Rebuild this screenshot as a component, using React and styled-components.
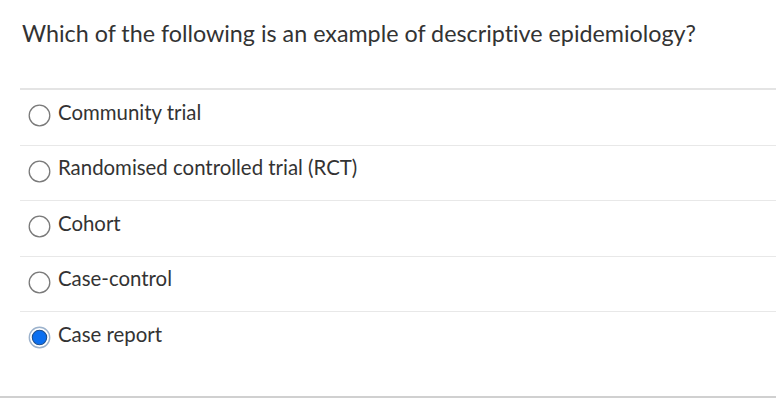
import React from "react";
import styled, { createGlobalStyle } from "styled-components";

const Global = createGlobalStyle`
  html, body { margin: 0; padding: 0; background: #fff; }
  body {
    font-family: Lato, "Open Sans", sans-serif;
    color: #333;
    font-variant-ligatures: none;
  }
`;

const Page = styled.div`
  width: 776px;
  height: 420px;
  box-sizing: border-box;
`;

const Quiz = styled.div`
  border-bottom: 2px solid #d0d0d0;
`;

const Question = styled.div`
  font-size: 23.3px;
  line-height: 26px;
  padding: 20px 0 0 22px;
  height: 88px;
  box-sizing: border-box;
`;

const Options = styled.div`
  margin-left: 20px;
  border-top: 2px solid #e4e4e4;
`;

const Row = styled.label`
  display: flex;
  align-items: flex-start;
  gap: 7px;
  height: ${(p) => (p.$last ? "84px" : "55.5px")};
  box-sizing: border-box;
  padding: 9.5px 0 0 8px;
  border-bottom: ${(p) => (p.$last ? "none" : "1.5px solid #e8e8e8")};
  font-size: 20.4px;
  line-height: 24px;
  color: #333;
`;

const RadioBox = styled.svg`
  flex: none;
  margin-top: 4.5px;
`;

const Radio = ({ checked }) => (
  <RadioBox width="23" height="23" viewBox="0 0 23 23">
    {checked ? (
      <>
        <circle cx="11.5" cy="11.5" r="10.2" fill="#fff" stroke="#9cb2cc" strokeWidth="1.4" />
        <circle cx="11.5" cy="11.5" r="7.2" fill="#0b6ff0" stroke="#1d4f8f" strokeWidth="1.1" />
      </>
    ) : (
      <circle cx="11.5" cy="11.5" r="10.3" fill="#fff" stroke="#7a7a7a" strokeWidth="1.3" />
    )}
  </RadioBox>
);

const options = [
  "Community trial",
  "Randomised controlled trial (RCT)",
  "Cohort",
  "Case-control",
  "Case report",
];

export default function App() {
  return (
    <Page>
      <Global />
      <Quiz>
        <Question>Which of the following is an example of descriptive epidemiology?</Question>
        <Options>
          {options.map((o, i) => (
            <Row key={o} $last={i === options.length - 1}>
              <Radio checked={i === options.length - 1} />
              <span>{o}</span>
            </Row>
          ))}
        </Options>
      </Quiz>
    </Page>
  );
}
